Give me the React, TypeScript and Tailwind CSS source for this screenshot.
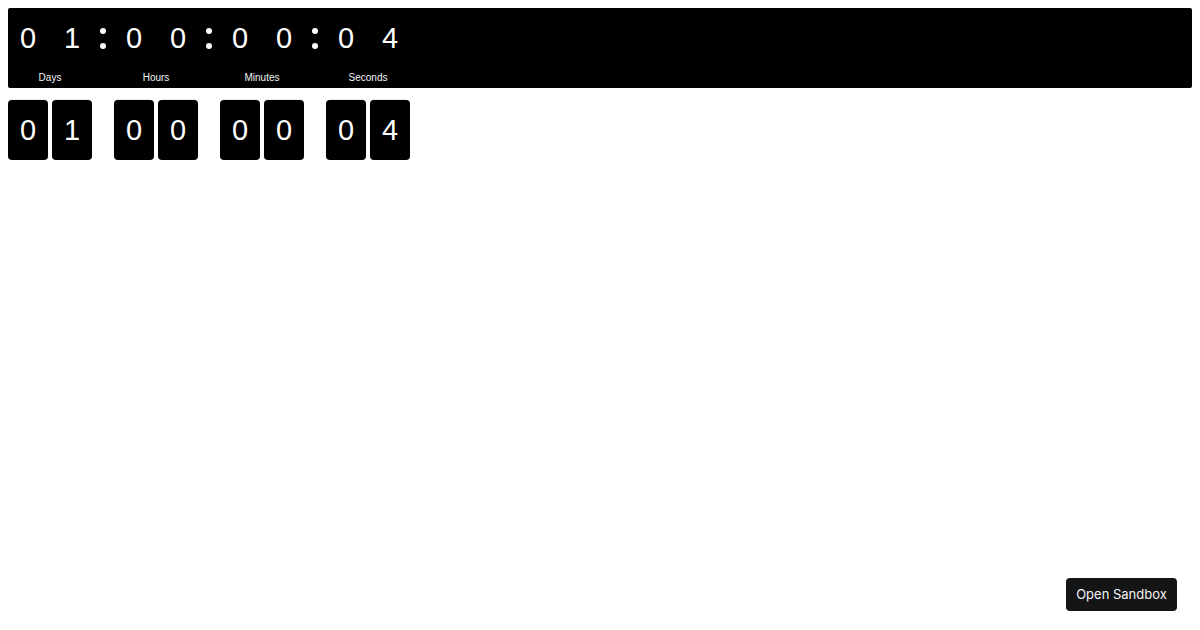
const groups = [
  { label: 'Days', digits: ['0', '1'] },
  { label: 'Hours', digits: ['0', '0'] },
  { label: 'Minutes', digits: ['0', '0'] },
  { label: 'Seconds', digits: ['0', '4'] },
];

function Colon() {
  return (
    <div className="flex w-[22px] flex-col items-center justify-center gap-[9px]">
      <span className="h-[6px] w-[6px] rounded-full bg-white" />
      <span className="h-[6px] w-[6px] rounded-full bg-white" />
    </div>
  );
}

export default function App() {
  return (
    <div
      className="relative h-[630px] w-[1200px] overflow-hidden bg-white p-2"
      style={{ fontFamily: '"Liberation Sans", Arial, sans-serif' }}
    >
      {/* Digital display */}
      <div className="flex h-[80px] flex-col rounded-[2px] bg-black text-white">
        <div className="flex h-[60px]">
          {groups.map((g, i) => (
            <div key={g.label} className="flex">
              {i > 0 && <Colon />}
              <div className="flex gap-1">
                {g.digits.map((d, j) => (
                  <div key={j} className="flex w-10 items-center justify-center text-[29px] leading-none">
                    {d}
                  </div>
                ))}
              </div>
            </div>
          ))}
        </div>
        <div className="flex h-5 gap-[22px]">
          {groups.map(g => (
            <div key={g.label} className="flex w-[84px] items-center justify-center text-[10px] leading-none text-gray-100">
              {g.label}
            </div>
          ))}
        </div>
      </div>

      {/* Flip cards */}
      <div className="mt-3 flex gap-[22px]">
        {groups.map(g => (
          <div key={g.label} className="flex gap-1">
            {g.digits.map((d, j) => (
              <div
                key={j}
                className="flex h-[60px] w-10 items-center justify-center rounded-[4px] bg-black text-[29px] leading-none text-white shadow-[0_-1px_0_#ececec]"
              >
                {d}
              </div>
            ))}
          </div>
        ))}
      </div>

      <button
        className="absolute bottom-[19px] right-[23px] h-[33px] w-[111px] rounded-[4px] bg-[#151515] text-[13px] text-gray-100"
        style={{ fontFamily: 'Inter, "Noto Sans", sans-serif' }}
      >
        Open Sandbox
      </button>
    </div>
  );
}
